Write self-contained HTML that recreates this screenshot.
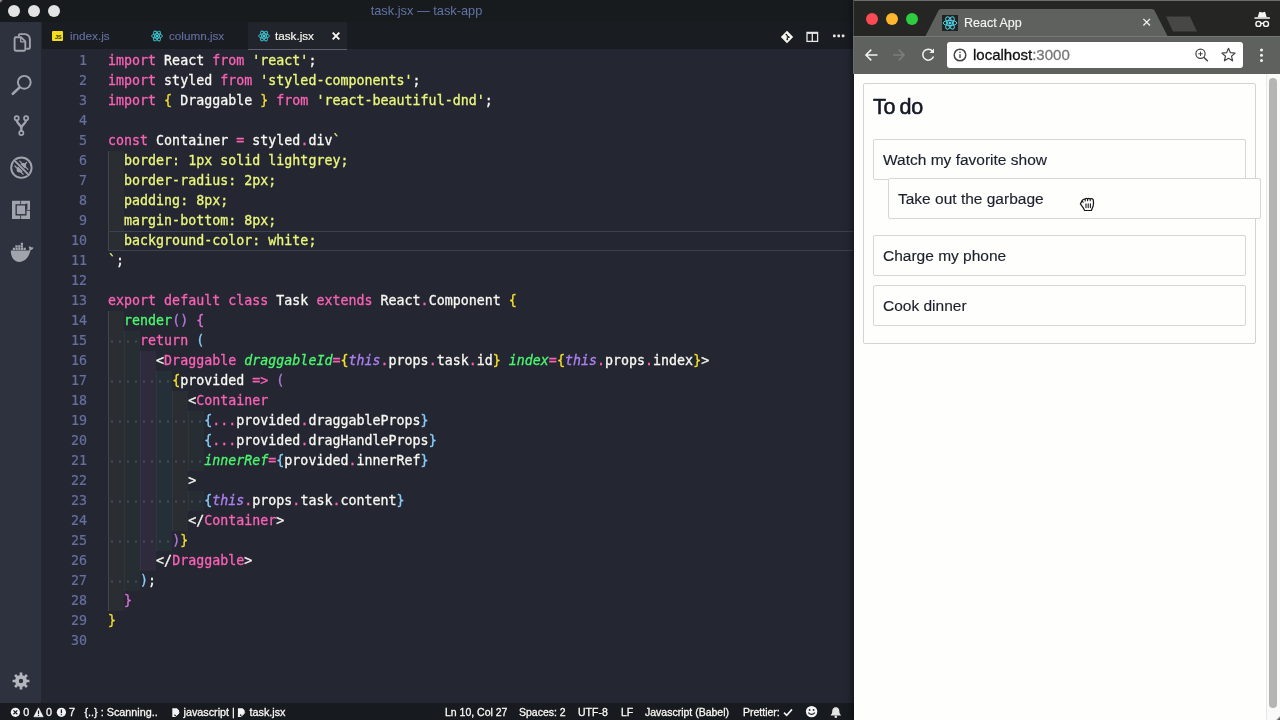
<!DOCTYPE html>
<html lang="en">
<head>
<meta charset="utf-8">
<title>task.jsx — task-app</title>
<style>
*{box-sizing:border-box;margin:0;padding:0}
html,body{width:1280px;height:720px;overflow:hidden;background:#16171d;font-family:"Liberation Sans",sans-serif;}
#vs,#br{will-change:transform}
#vs{position:absolute;left:0;top:0;width:854px;height:720px;background:#242731;overflow:hidden}
#titlebar{position:absolute;left:0;top:0;width:853px;height:22px;background:#181b1e;color:#6272a4;font-size:12.800px;text-align:center;line-height:22px}
.tl{position:absolute;top:5px;width:12px;height:12px;border-radius:50%;background:#e2e3e3}
#activity{position:absolute;left:0;top:22px;width:41px;height:681px;background:#2e313e}
#tabs{position:absolute;left:42px;top:22px;width:812px;height:27px;background:#191c20}
.tab{position:absolute;top:0;height:28px;font-size:11.700px;line-height:28px;color:#646d9f;white-space:nowrap;-webkit-text-stroke:.15px}
.tab.active{background:#22242c;color:#f8f8f2;border-bottom:1px solid #5d5f6b;height:28px}
#status{position:absolute;left:0;top:703px;width:854px;height:17px;background:#171a1e;color:#f8f8f2;font-size:10.800px;line-height:19px;white-space:nowrap;-webkit-text-stroke:.3px}
#status span{position:absolute;top:0}
#status span.r{font-size:10.500px}
#gutter{position:absolute;left:42px;top:51px;width:45px;text-align:right;color:#666f9f;-webkit-text-stroke:.2px}
#code,#gutter{font-family:"DejaVu Sans Mono","Liberation Mono",monospace;font-size:13.3px;line-height:20px;letter-spacing:.010px;white-space:pre}
#code{position:absolute;left:108px;top:51px;color:#f8f8f2;-webkit-text-stroke:.3px}
#code div,#gutter div{height:20px}
.k{color:#fa62b6}.s{color:#ebf67c}.g{color:#4af76f}.p{color:#ab80f2;font-style:italic}.a{color:#4af76f;font-style:italic}.b4{color:#b379de}
.b1{color:#f6df2c}.b2{color:#da70d6}.b3{color:#87cefa}
.ws{position:absolute;left:108px;height:20px;background:radial-gradient(circle at 4px 10.500px,rgba(190,196,225,.2) .8px,transparent 1.400px) 0 0/8px 20px repeat-x}
#curline{position:absolute;left:108px;top:231px;width:746px;height:20px;border-top:1px solid #3d404e;border-bottom:1px solid #3d404e}

#br{position:absolute;left:854px;top:0;width:426px;height:720px;background:#fff;box-shadow:-1px 0 7px 1px rgba(0,0,0,.5)}
#frame{position:absolute;left:-1px;top:0;width:427px;height:36px;background:#252624;border-left:1px solid #4a4c4a;padding:0}
#toolbar{position:absolute;left:-1px;top:36px;width:427px;height:38px;background:#5f615e;border-top:1px solid #757774;border-left:1px solid #6c6e6b}
#url{position:absolute;left:93px;top:5px;width:296px;height:26px;background:#fff;border-radius:3px}
#page{position:absolute;left:0;top:74px;width:426px;height:646px;background:#fefefd;color:#111827}
#col{position:absolute;left:9px;top:9px;width:393px;height:261px;border:1px solid #d3d3d3;border-radius:2px}
#col h3{position:absolute;left:9px;top:10.700px;font-size:21.500px;font-weight:normal;letter-spacing:-.2px;word-spacing:-1.600px;line-height:24px;-webkit-text-stroke:.55px #141824;color:#141824;white-space:nowrap}
#sb{position:absolute;left:412px;top:0;width:14px;height:647px;background:#fafafa;border-left:1px solid #e8e8e8}
#sb i{position:absolute;left:2px;top:4px;width:8px;height:630px;border-radius:4px;background:#b5b6b3}
.task{position:absolute;width:373px;height:41px;border:1px solid #d6d6d6;border-radius:2px;background:#fefefd;font-size:15.500px;line-height:40px;padding-left:9px;color:#1c202c;-webkit-text-stroke:.15px #1c202c}
</style>
</head>
<body>
<div id="vs">
  <div id="titlebar">task.jsx — task-app
    <i class="tl" style="left:8px"></i><i class="tl" style="left:28px"></i><i class="tl" style="left:48px"></i>
  </div>
  <div id="tabs">
    <div class="tab" style="left:0;width:100px;padding-left:28px">index.js</div>
    <div class="tab" style="left:100px;width:106px;padding-left:27px">column.jsx</div>
    <div class="tab active" style="left:206px;width:99px;padding-left:27px">task.jsx</div>
    <div style="position:absolute;left:10px;top:8.500px;width:10.500px;height:10.200px;background:#f5de19;border-radius:1px;color:#222;font-size:5.500px;font-weight:bold;line-height:13.500px;text-align:right;padding-right:.8px">JS</div>
    <svg style="position:absolute;left:109px;top:8px" width="12" height="12" viewBox="-11 -11 22 22" fill="none" stroke="#3ec6d4" stroke-width="1.7"><ellipse rx="10" ry="4"/><ellipse rx="10" ry="4" transform="rotate(60)"/><ellipse rx="10" ry="4" transform="rotate(120)"/><circle r="2.4" fill="#3ec6d4" stroke="none"/></svg>
    <svg style="position:absolute;left:216px;top:8px" width="12" height="12" viewBox="-11 -11 22 22" fill="none" stroke="#3ec6d4" stroke-width="1.7"><ellipse rx="10" ry="4"/><ellipse rx="10" ry="4" transform="rotate(60)"/><ellipse rx="10" ry="4" transform="rotate(120)"/><circle r="2.4" fill="#3ec6d4" stroke="none"/></svg>
    <svg style="position:absolute;left:289px;top:9px" width="10" height="10" viewBox="0 0 10 10" stroke="#f8f8f2" stroke-width="1.900" stroke-linecap="butt"><path d="M1.700 1.700l6.600 6.600M8.300 1.700l-6.600 6.600"/></svg>
    <svg style="position:absolute;left:738px;top:8.300px" width="14" height="14" viewBox="-7 -7 14 14"><path d="M0-6.200L6.200 0L0 6.200L-6.200 0z" fill="#f8f8f2"/><path d="M-.8-2.600l2.400 2.400M.3-1.200v3.400" stroke="#1a1d22" stroke-width="1" fill="none"/><circle cx="-.6" cy="-2.400" r=".9" fill="#1a1d22"/><circle cx="1.800" cy=".2" r=".9" fill="#1a1d22"/><circle cx=".3" cy="2.400" r=".9" fill="#1a1d22"/></svg>
    <svg style="position:absolute;left:764px;top:9px" width="13" height="12" viewBox="0 0 13 12" fill="none" stroke="#e6e6e6"><rect x="1" y="1.400" width="10.600" height="9" stroke-width="1.300"/><path d="M1 2h10.600" stroke-width="1.800"/><path d="M6.300 2v8.400" stroke-width="1.300"/></svg>
    <svg style="position:absolute;left:790px;top:12px" width="14" height="4" viewBox="0 0 14 4" fill="#e6e6e6"><rect x="1" y=".6" width="2.600" height="2.600" rx=".6"/><rect x="5.400" y=".6" width="2.600" height="2.600" rx=".6"/><rect x="9.800" y=".6" width="2.600" height="2.600" rx=".6"/></svg>
  </div>
  <div id="activity">
    <svg width="42" height="681" viewBox="0 22 42 681" style="position:absolute;left:0;top:0" fill="none" stroke="#a2a4ad" stroke-linecap="round" stroke-linejoin="round">
      <!-- files -->
      <path d="M15.800 37.300h5.400l4.100 4.100v8.200q0 1.200-1.200 1.200h-8.300q-1.200 0-1.200-1.200v-11.100q0-1.200 1.200-1.200z" stroke-width="1.900"/>
      <path d="M20.700 37.800v4h4" stroke-width="1.300"/>
      <path d="M18.800 35.800v-.4q0-1.300 1.300-1.300h4.800q4.600 .4 5 5v8.300q0 1.300-1.300 1.300h-1.600" stroke-width="1.900"/>
      <!-- search -->
      <circle cx="24.3" cy="82.3" r="6.4" stroke-width="1.9"/>
      <path d="M19.4 87.6l-6.6 6.2" stroke-width="2.6"/>
      <!-- git -->
      <circle cx="16.700" cy="118.300" r="2.100" stroke-width="1.700"/>
      <circle cx="26.100" cy="118.300" r="2.100" stroke-width="1.700"/>
      <circle cx="21.300" cy="133" r="2.100" stroke-width="1.700"/>
      <path d="M16.900 120.800c.4 3 4.400 4.200 4.400 7.200v2.800M25.900 120.800c-.4 3-4.600 4.200-4.600 7.200" stroke-width="2.400"/>
      <!-- debug -->
      <circle cx="21.400" cy="167.700" r="10.200" stroke-width="1.900"/>
      <g transform="translate(21.400 167.700) rotate(-45)">
        <ellipse rx="5.800" ry="3.500" fill="#a2a4ad" stroke="none"/>
        <path d="M-3.400-5.800v11.600M3.400-5.800v11.600M5 0h2.400" stroke-width="1.200"/>
      </g>
      <path d="M14.600 160.700l13.800 13.800" stroke="#2e313e" stroke-width="3.400" stroke-linecap="butt"/>
      <path d="M14.300 160.400l14.400 14.400" stroke-width="1.900"/>
      <!-- extensions -->
      <path d="M12 200.800h18v18.200h-18zM15.500 204.300v11.200h11v-11.200z" fill="#a2a4ad" fill-rule="evenodd" stroke="none"/>
      <rect x="16.800" y="205.500" width="8.400" height="8.600" fill="#a2a4ad" stroke="none"/>
      <path d="M20.600 200.800v3.500M26.500 210.400h3.500M20.600 215.500v3.500" stroke="#2e313e" stroke-width=".8"/>
      <rect x="25.600" y="203.600" width="1.800" height="5.800" fill="#2e313e" stroke="none"/>
      <!-- docker -->
      <path d="M10.800 250.400h18.400c.4-1.400 .2-2.400-.6-3.400c1-.9 2.200-.5 2.800 .4c.8-.2 1.600 0 2.200 .4c-.4 1.300-1.600 2-3 2.100c-1.400 6.400-5.200 12-11.400 12c-5.600 0-8.600-5.500-8.400-11.500z" fill="#a2a4ad" stroke="none"/>
      <path d="M12.800 248.900h13.400M15.400 246.400h8M20.800 243.900h2.600" stroke-width="2.100" stroke-linecap="butt" stroke-dasharray="2.200 0.500"/>
      <!-- gear -->
      <g transform="translate(21 681)" stroke="#b4b6bd">
        <circle r="4.100" stroke-width="3.800"/>
        <path d="M0-8.400V-5M0 8.400V5M-8.400 0H-5M8.400 0H5M-5.940-5.940L-3.600-3.600M5.940 5.940L3.600 3.600M-5.940 5.940L-3.600 3.600M5.940-5.940L3.600-3.600" stroke-width="2.700" stroke-linecap="butt"/>
      </g>
    </svg>
  </div>
  <svg id="guides" style="position:absolute;left:0;top:0" width="854" height="720"><rect x="108" y="151" width="16" height="100" fill="rgba(255,255,64,.032)"/><rect x="108" y="151" width="1" height="100" fill="rgba(160,165,190,.2)"/><rect x="108" y="311" width="16" height="300" fill="rgba(255,255,64,.032)"/><rect x="108" y="311" width="1" height="300" fill="rgba(160,165,190,.2)"/><rect x="124" y="331" width="16" height="260" fill="rgba(127,255,127,.032)"/><rect x="124" y="331" width="1" height="260" fill="rgba(160,165,190,.07)"/><rect x="140" y="351" width="16" height="220" fill="rgba(255,100,255,.058)"/><rect x="140" y="351" width="1" height="220" fill="rgba(160,165,190,.07)"/><rect x="156" y="371" width="16" height="180" fill="rgba(79,236,236,.042)"/><rect x="156" y="371" width="1" height="180" fill="rgba(160,165,190,.07)"/><rect x="172" y="391" width="16" height="140" fill="rgba(255,255,64,.032)"/><rect x="172" y="391" width="1" height="140" fill="rgba(160,165,190,.07)"/><rect x="188" y="411" width="16" height="60" fill="rgba(127,255,127,.032)"/><rect x="188" y="411" width="1" height="60" fill="rgba(160,165,190,.07)"/><rect x="188" y="491" width="16" height="20" fill="rgba(127,255,127,.032)"/><rect x="188" y="491" width="1" height="20" fill="rgba(160,165,190,.07)"/></svg>
  <i class="ws" style="top:331px;width:32px"></i><i class="ws" style="top:371px;width:64px"></i><i class="ws" style="top:411px;width:96px"></i><i class="ws" style="top:451px;width:96px"></i><i class="ws" style="top:491px;width:96px"></i><i class="ws" style="top:531px;width:64px"></i><i class="ws" style="top:571px;width:32px"></i>
  <div id="curline"></div>
  <div id="gutter"><div>1</div><div>2</div><div>3</div><div>4</div><div>5</div><div>6</div><div>7</div><div>8</div><div>9</div><div>10</div><div>11</div><div>12</div><div>13</div><div>14</div><div>15</div><div>16</div><div>17</div><div>18</div><div>19</div><div>20</div><div>21</div><div>22</div><div>23</div><div>24</div><div>25</div><div>26</div><div>27</div><div>28</div><div>29</div><div>30</div></div>
  <div id="code"><div><span class="k">import</span> React <span class="k">from</span> <span class="s">'react'</span>;</div><div><span class="k">import</span> styled <span class="k">from</span> <span class="s">'styled-components'</span>;</div><div><span class="k">import</span> <span class="b1">{</span> Draggable <span class="b1">}</span> <span class="k">from</span> <span class="s">'react-beautiful-dnd'</span>;</div><div></div><div><span class="k">const</span> Container <span class="k">=</span> styled<span class="k">.</span>div<span class="s">`</span></div><div><span class="s">  border: 1px solid lightgrey;</span></div><div><span class="s">  border-radius: 2px;</span></div><div><span class="s">  padding: 8px;</span></div><div><span class="s">  margin-bottom: 8px;</span></div><div><span class="s">  background-color: white;</span></div><div><span class="s">`</span>;</div><div></div><div><span class="k">export default class</span> Task <span class="k">extends</span> React<span class="k">.</span>Component <span class="b1">{</span></div><div>  <span class="g">render</span><span class="b4">()</span> <span class="b2">{</span></div><div>    <span class="k">return</span> <span class="b3">(</span></div><div>      &lt;<span class="k">Draggable</span> <span class="a">draggableId</span><span class="k">=</span><span class="b1">{</span><span class="p">this</span><span class="k">.</span>props<span class="k">.</span>task<span class="k">.</span>id<span class="b1">}</span> <span class="a">index</span><span class="k">=</span><span class="b1">{</span><span class="p">this</span><span class="k">.</span>props<span class="k">.</span>index<span class="b1">}</span>&gt;</div><div>        <span class="b1">{</span>provided <span class="k">=&gt;</span> <span class="b4">(</span></div><div>          &lt;<span class="k">Container</span></div><div>            <span class="b3">{</span><span class="k">...</span>provided<span class="k">.</span>draggableProps<span class="b3">}</span></div><div>            <span class="b3">{</span><span class="k">...</span>provided<span class="k">.</span>dragHandleProps<span class="b3">}</span></div><div>            <span class="a">innerRef</span><span class="k">=</span><span class="b3">{</span>provided<span class="k">.</span>innerRef<span class="b3">}</span></div><div>          &gt;</div><div>            <span class="b3">{</span><span class="p">this</span><span class="k">.</span>props<span class="k">.</span>task<span class="k">.</span>content<span class="b3">}</span></div><div>          &lt;/<span class="k">Container</span>&gt;</div><div>        <span class="b4">)</span><span class="b1">}</span></div><div>      &lt;/<span class="k">Draggable</span>&gt;</div><div>    <span class="b3">)</span>;</div><div>  <span class="b2">}</span></div><div><span class="b1">}</span></div><div></div></div>
  <div id="status">
    <svg style="position:absolute;left:0;top:0" width="854" height="17" viewBox="0 703 854 17">
      <circle cx="15.400" cy="712.300" r="4.600" fill="#f4f4f4"/>
      <path d="M13.500 710.400l3.800 3.800M17.300 710.400l-3.800 3.800" stroke="#171a1e" stroke-width="1.300"/>
      <path d="M38.500 707.800l4.700 9h-9.400z" fill="#f4f4f4" stroke="#f4f4f4" stroke-width=".6" stroke-linejoin="round"/>
      <path d="M38.500 710.600v3.300M38.500 714.800v1.100" stroke="#171a1e" stroke-width="1.200"/>
      <circle cx="61.400" cy="712.300" r="4.600" fill="#f4f4f4"/>
      <path d="M61.400 709.600v3.600M61.400 714.200v1.100" stroke="#171a1e" stroke-width="1.300"/>
      <g id="dc" fill="#f4f4f4"><path d="M172.300 708.200h4.600l2.200 2.200v2.200l-2.600 2.800-1.500-1.300-1 1.200 2.400 1.700h-4.100z"/><path d="M175.200 714.300l1.400 1.300 2.700-3" stroke="#f4f4f4" stroke-width="1" fill="none"/></g>
      <use href="#dc" x="65.600"/>
      <path d="M784 712.600l2.700 2.700 5.300-5.900" stroke="#f4f4f4" stroke-width="1.600" fill="none"/>
      <circle cx="811.600" cy="711.600" r="5.700" fill="#f4f4f4"/>
      <circle cx="809.600" cy="709.900" r=".9" fill="#171a1e"/><circle cx="813.600" cy="709.900" r=".9" fill="#171a1e"/>
      <path d="M808.300 712.600q3.300 3.600 6.600 0" stroke="#171a1e" stroke-width="1.100" fill="none"/>
      <path d="M835.800 707.200c3 0 3.600 2.600 3.600 4.600c0 1.800 .8 2.600 1.700 3.600h-10.600c.9-1 1.700-1.800 1.700-3.600c0-2 .6-4.600 3.600-4.600z" fill="#e4e4e4"/>
      <circle cx="835.800" cy="716.800" r="1.300" fill="#e4e4e4"/>
    </svg>
    <span style="left:23.300px">0</span><span style="left:46px">0</span><span style="left:69px">7</span>
    <span style="left:84.500px">{..} : Scanning..</span>
    <span style="left:183.500px">javascript | </span><span style="left:249.500px">task.jsx</span>
    <span class="r" style="left:445px">Ln 10, Col 27</span><span style="left:519px" class="r">Spaces: 2</span><span style="left:578px" class="r">UTF-8</span><span style="left:621px" class="r">LF</span><span style="left:645px" class="r">Javascript (Babel)</span><span style="left:743px" class="r">Prettier:</span>
  </div>
</div>
<div id="br">
  <div id="frame">
    <i class="tl" style="left:12px;top:13px;background:#fc4a55;width:12px;height:12px"></i>
    <i class="tl" style="left:32px;top:13px;background:#fdb62d;width:12px;height:12px"></i>
    <i class="tl" style="left:52px;top:13px;background:#2fcb41;width:12px;height:12px"></i>
    <svg style="position:absolute;left:0;top:0" width="426" height="37" viewBox="854 0 426 37">
      <rect x="853" y="0" width="427" height="1" fill="#6b6e6a"/><path d="M925 37L938.500 10.500Q939.300 9 941 9H1152Q1153.700 9 1154.500 10.500L1168 37z" fill="#5f615e"/>
      <path d="M1166 16.500h24l7 15h-24z" fill="#474745"/>
      <rect x="942" y="15" width="16" height="16" fill="#222"/>
      <g transform="translate(950 23)" fill="none" stroke="#4fd3e6" stroke-width="1"><ellipse rx="6.800" ry="2.600"/><ellipse rx="6.800" ry="2.600" transform="rotate(60)"/><ellipse rx="6.800" ry="2.600" transform="rotate(120)"/><circle r="1.500" fill="#4fd3e6" stroke="none"/></g>
      <path d="M1143.400 18.900l6.600 6.600M1150 18.900l-6.600 6.600" stroke="#f2f2f2" stroke-width="1.300"/>
      <!-- incognito -->
      <g fill="#f4f4f4">
        <path d="M1257.700 17.300l1.400-4.700q.3-.9 1.200-.7l1.900.5 1.900-.5q.9-.2 1.200.7l1.400 4.700z"/>
        <rect x="1254.400" y="17.300" width="15.600" height="1.500" rx=".5"/>
      </g>
      <g fill="none" stroke="#f4f4f4" stroke-width="1.400"><circle cx="1258.400" cy="23.900" r="2.500"/><circle cx="1266" cy="23.900" r="2.500"/><path d="M1260.900 23.300h2.600"/></g>
    </svg>
    <div style="position:absolute;left:110px;top:15px;font-size:12.500px;color:#f4f4f4;line-height:16px;white-space:nowrap;-webkit-text-stroke:.15px">React App</div>
  </div>
  <div id="toolbar">
    <svg style="position:absolute;left:0;top:0" width="426" height="36" viewBox="854 37 426 36" fill="none">
      <path d="M877.500 55h-11M871.300 49.600l-5.400 5.400 5.400 5.400" stroke="#f2f2f2" stroke-width="1.500"/>
      <path d="M893 55h11M898.700 49.600l5.400 5.400-5.400 5.400" stroke="#7d7d7b" stroke-width="1.500"/>
      <path d="M932.600 51.200A5.500 5.500 0 1 0 933.500 56.500" stroke="#f2f2f2" stroke-width="1.500"/>
      <path d="M934 48.500v4.500h-4.500z" fill="#f2f2f2"/>
      <g fill="#f2f2f2"><circle cx="1261.500" cy="50" r="1.500"/><circle cx="1261.500" cy="55.300" r="1.500"/><circle cx="1261.500" cy="60.600" r="1.500"/></g>
    </svg>
    <div id="url">
      <svg style="position:absolute;left:0;top:0" width="295" height="26" viewBox="947 42 295 26" fill="none" stroke="#444">
        <circle cx="960" cy="55" r="5.800" stroke-width="1.500"/>
        <path d="M960 54.200v3.800" stroke-width="1.400"/><circle cx="960" cy="52.200" r=".8" fill="#444" stroke="none"/>
        <circle cx="1200.500" cy="53.800" r="4.600" stroke-width="1.200"/><path d="M1203.800 57.200l4 4" stroke-width="1.500"/><path d="M1198.300 53.800h4.400M1200.500 51.600v4.400" stroke-width="1"/>
        <path d="M1228.500 48.300l1.900 4.400 4.700.4-3.600 3.100 1.100 4.600-4.100-2.500-4.100 2.500 1.100-4.600-3.600-3.100 4.700-.4z" stroke-width="1.200" stroke-linejoin="round"/>
      </svg>
      <div style="position:absolute;left:26px;top:4px;font-size:15px;line-height:18px;color:#111;white-space:nowrap;-webkit-text-stroke:.3px">localhost<span style="color:#777">:3000</span></div>
    </div>
  </div>
  <div id="page">
    <div id="col">
      <h3>To do</h3>
      <div class="task" style="left:9px;top:55px">Watch my favorite show</div>
      <div class="task" style="left:9px;top:151px">Charge my phone</div>
      <div class="task" style="left:9px;top:201px">Cook dinner</div>
      <div class="task" style="left:24px;top:94px">Take out the garbage</div>
    </div>
    <svg style="position:absolute;left:225px;top:123px" width="16" height="15" viewBox="-1 -1 16 15" fill="#fff" stroke="#1a1a1a" stroke-width="1.250" stroke-linejoin="round" stroke-linecap="round">
      <path d="M.4 5.900L2.300 2.400Q3.400 .8 5 1.200Q6.200 -.1 7.600 .9Q9 -.1 10.300 .9Q12 .2 13.200 1.700Q13.800 4.800 13.200 7.800L11.400 12.400L4.600 12.500L3.600 10.400z"/>
      <path d="M6 5.800v3.800M8.200 5.800v3.800M10.400 5.800v3.800M5.200 1.400v1.600M7.600 1v1.800M10.200 1v1.800M2.400 3.200l.8 1.200" fill="none" stroke-width="1.100"/>
    </svg>
    <div id="sb"><i></i></div>
  </div>
</div>
<i style="position:absolute;left:0;top:0;width:4px;height:4px;background:radial-gradient(circle at 0 0,#9a9d9c 0,#8a8d8c 1.200px,transparent 3px)"></i>
<i style="position:absolute;left:1274px;top:714px;width:6px;height:6px;background:linear-gradient(135deg,transparent 62%,#6c6e6c 80%,#4a4c4a 100%)"></i>
</body>
</html>
